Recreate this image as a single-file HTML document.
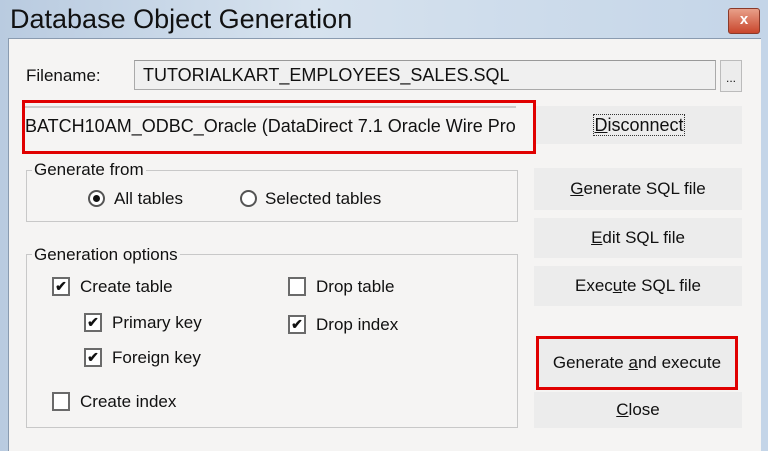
<!DOCTYPE html><html><head><style>
body{margin:0;width:768px;height:450px;overflow:hidden;font-family:"Liberation Sans",sans-serif;font-size:17px;color:#111;background:linear-gradient(90deg,#b9cbe0,#d6e2ee 40%,#c4d5e8);position:relative}
.a{position:absolute}
.body{left:8px;top:38px;width:752px;height:412px;background:#f5f4f3;border-left:1px solid #8a9bb0;border-top:1px solid #8a9bb0}
.btn{position:absolute;background:#ececec;text-align:center;box-sizing:border-box}
.grp{position:absolute;border:1px solid #c8c8c8}
.lg{position:absolute;background:#f5f4f3;padding:0 2px}
.cb{position:absolute;width:14px;height:15px;border:2px solid #6a6a6a;background:#fff;font-size:14px;line-height:15px;text-align:center;font-weight:bold}
.rb{position:absolute;width:13px;height:13px;border:2px solid #555;border-radius:50%;background:#fff}
</style></head><body>
<div class="a" style="left:10px;top:4px;font-size:27px;color:#111">Database Object Generation</div>
<div class="a" style="left:728px;top:8px;width:30px;height:24px;background:linear-gradient(#e8a08a,#c9462c);border:1px solid #8a3a2a;border-radius:3px;color:#fff;font-weight:bold;text-align:center;line-height:22px;font-size:15px">x</div>
<div class="a body"></div>
<div class="a" style="left:26px;top:66px">Filename:</div>
<div class="a" style="left:134px;top:60px;width:582px;height:30px;border:1px solid #aaa;border-top-color:#999;background:#f0f0f0;box-sizing:border-box;padding:4px 8px;font-size:18px">TUTORIALKART_EMPLOYEES_SALES.SQL</div>
<div class="btn" style="left:720px;top:60px;width:22px;height:32px;border:1px solid #bbb;font-size:12px;line-height:34px">...</div>
<div class="a" style="left:24px;top:106px;width:492px;height:2px;background:#ccc"></div>
<div class="a" style="left:25px;top:116px;font-size:18px;white-space:nowrap;width:491px;overflow:hidden">BATCH10AM_ODBC_Oracle (DataDirect 7.1 Oracle Wire Protocol)</div>
<div class="a" style="left:22px;top:100px;width:514px;height:54px;border:3px solid #e00000;box-sizing:border-box"></div>
<div class="btn" style="left:536px;top:106px;width:206px;height:38px;line-height:38px;font-size:18px"><span style="outline:1px dotted #333"><u>D</u>isconnect</span></div>
<div class="grp" style="left:26px;top:170px;width:490px;height:50px"></div>
<div class="lg" style="left:32px;top:160px">Generate from</div>
<div class="rb" style="left:88px;top:190px"><div style="position:absolute;left:3px;top:3px;width:7px;height:7px;border-radius:50%;background:#111"></div></div>
<div class="a" style="left:114px;top:189px">All tables</div>
<div class="rb" style="left:240px;top:190px"></div>
<div class="a" style="left:265px;top:189px">Selected tables</div>
<div class="btn" style="left:534px;top:168px;width:208px;height:42px;line-height:42px"><u>G</u>enerate SQL file</div>
<div class="btn" style="left:534px;top:218px;width:208px;height:40px;line-height:40px"><u>E</u>dit SQL file</div>
<div class="btn" style="left:534px;top:266px;width:208px;height:40px;line-height:40px">Exec<u>u</u>te SQL file</div>
<div class="btn" style="left:536px;top:336px;width:202px;height:54px;line-height:48px;border:3px solid #e00000">Generate <u>a</u>nd execute</div>
<div class="btn" style="left:534px;top:392px;width:208px;height:36px;line-height:36px"><u>C</u>lose</div>
<div class="grp" style="left:26px;top:254px;width:490px;height:172px"></div>
<div class="lg" style="left:32px;top:245px">Generation options</div>
<div class="cb" style="left:52px;top:277px">✔</div><div class="a" style="left:80px;top:277px">Create table</div>
<div class="cb" style="left:84px;top:313px">✔</div><div class="a" style="left:112px;top:313px">Primary key</div>
<div class="cb" style="left:84px;top:348px">✔</div><div class="a" style="left:112px;top:348px">Foreign key</div>
<div class="cb" style="left:52px;top:392px"></div><div class="a" style="left:80px;top:392px">Create index</div>
<div class="cb" style="left:288px;top:277px"></div><div class="a" style="left:316px;top:277px">Drop table</div>
<div class="cb" style="left:288px;top:315px">✔</div><div class="a" style="left:316px;top:315px">Drop index</div>
</body></html>
